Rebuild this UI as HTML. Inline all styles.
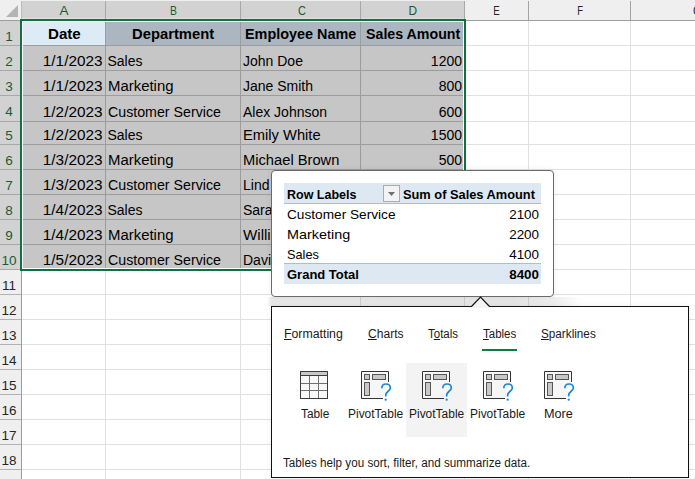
<!DOCTYPE html>
<html><head><meta charset="utf-8">
<style>
*{margin:0;padding:0;box-sizing:border-box}
html,body{width:695px;height:479px;overflow:hidden;background:#fff}
body{position:relative;font-family:"Liberation Sans",sans-serif;color:#000}
.a{position:absolute}
.t{position:absolute;white-space:nowrap;font-size:14px;line-height:14px}
.b{font-weight:bold}
.nm{transform:scaleX(1.05);transform-origin:0 0}
.mk{transform:scaleX(1.065);transform-origin:0 0}
.dt{transform:scaleX(1.095);transform-origin:100% 0}
.hl{position:absolute;height:1px}
.vl{position:absolute;width:1px}
.ch{position:absolute;top:4px;font-size:13.5px;line-height:14px;text-align:center;color:#262626;white-space:nowrap}
.rh{position:absolute;left:0;width:18px;font-size:13.5px;line-height:14px;text-align:center;color:#262626}
.sel{color:#185c37}
.qt{position:absolute;white-space:nowrap;font-size:12.5px;line-height:12px;color:#1a1a1a}
u{text-decoration:underline;text-decoration-thickness:1px;text-underline-offset:1px}
.pt{transform:scaleX(0.957);transform-origin:0 0}
</style></head><body>

<!-- column header bar -->
<div class="a" style="left:0;top:0;width:695px;height:20px;background:#efefef"></div>
<div class="hl" style="left:0;top:20px;width:695px;background:#9e9e9e"></div>
<!-- corner triangle -->
<svg class="a" style="left:0;top:0" width="21" height="20"><polygon points="6,17 18,17 18,5" fill="#b4b4b4"/></svg>
<!-- selected column header A-D -->
<div class="a" style="left:22px;top:1px;width:442px;height:17px;background:#d2d2d2"></div>
<div class="hl" style="left:22px;top:18px;width:442px;background:#e6dede"></div>
<!-- header separators -->
<div class="vl" style="left:21px;top:1px;height:19px;background:#bdbdbd"></div>
<div class="vl" style="left:105px;top:1px;height:18px;background:#a8a8a8"></div>
<div class="vl" style="left:240px;top:1px;height:18px;background:#a8a8a8"></div>
<div class="vl" style="left:360px;top:1px;height:18px;background:#a8a8a8"></div>
<div class="vl" style="left:464px;top:1px;height:19px;background:#a8a8a8"></div>
<div class="vl" style="left:528px;top:1px;height:19px;background:#a4a4a4"></div>
<div class="vl" style="left:630px;top:1px;height:19px;background:#a4a4a4"></div>
<!-- column labels -->
<div class="ch sel" style="left:22px;width:84px"><span style="display:inline-block;transform:scaleX(1.0)">A</span></div>
<div class="ch sel" style="left:106px;width:135px"><span style="display:inline-block;transform:scaleX(0.77)">B</span></div>
<div class="ch sel" style="left:241px;width:121px"><span style="display:inline-block;transform:scaleX(0.81)">C</span></div>
<div class="ch sel" style="left:361px;width:103px"><span style="display:inline-block;transform:scaleX(0.88)">D</span></div>
<div class="ch" style="left:465px;width:63px"><span style="display:inline-block;transform:scaleX(0.72)">E</span></div>
<div class="ch" style="left:529px;width:102px"><span style="display:inline-block;transform:scaleX(0.7)">F</span></div>
<div class="ch" style="left:634px;width:126px"><span style="display:inline-block;transform:scaleX(0.8)">G</span></div>

<!-- row header column -->
<div class="a" style="left:0;top:21px;width:21px;height:458px;background:#efefef"></div>
<div class="a" style="left:0;top:21px;width:20px;height:248px;background:#d2d2d2"></div>


<!-- gridlines -->
<div id="grid"></div>
<div class="vl" style="left:105px;top:21px;height:458px;background:#e1e1e1"></div>
<div class="vl" style="left:240px;top:21px;height:458px;background:#e1e1e1"></div>
<div class="vl" style="left:360px;top:21px;height:458px;background:#e1e1e1"></div>
<div class="vl" style="left:464px;top:21px;height:458px;background:#e1e1e1"></div>
<div class="vl" style="left:528px;top:21px;height:458px;background:#e1e1e1"></div>
<div class="vl" style="left:630px;top:21px;height:458px;background:#e1e1e1"></div>
<div class="hl" style="left:0;top:45px;width:695px;background:#e1e1e1"></div>
<div class="hl" style="left:0;top:70px;width:695px;background:#e1e1e1"></div>
<div class="hl" style="left:0;top:95px;width:695px;background:#e1e1e1"></div>
<div class="hl" style="left:0;top:121px;width:695px;background:#e1e1e1"></div>
<div class="hl" style="left:0;top:144px;width:695px;background:#e1e1e1"></div>
<div class="hl" style="left:0;top:169px;width:695px;background:#e1e1e1"></div>
<div class="hl" style="left:0;top:194px;width:695px;background:#e1e1e1"></div>
<div class="hl" style="left:0;top:219px;width:695px;background:#e1e1e1"></div>
<div class="hl" style="left:0;top:244px;width:695px;background:#e1e1e1"></div>
<div class="hl" style="left:0;top:269px;width:695px;background:#e1e1e1"></div>
<div class="hl" style="left:0;top:294px;width:695px;background:#e1e1e1"></div>
<div class="hl" style="left:0;top:319px;width:695px;background:#e1e1e1"></div>
<div class="hl" style="left:0;top:344px;width:695px;background:#e1e1e1"></div>
<div class="hl" style="left:0;top:369px;width:695px;background:#e1e1e1"></div>
<div class="hl" style="left:0;top:394px;width:695px;background:#e1e1e1"></div>
<div class="hl" style="left:0;top:419px;width:695px;background:#e1e1e1"></div>
<div class="hl" style="left:0;top:444px;width:695px;background:#e1e1e1"></div>
<div class="hl" style="left:0;top:469px;width:695px;background:#e1e1e1"></div>
<!-- row header separators -->
<div class="hl" style="left:0;top:45px;width:21px;background:#a8a8a8"></div>
<div class="hl" style="left:0;top:70px;width:21px;background:#a8a8a8"></div>
<div class="hl" style="left:0;top:95px;width:21px;background:#a8a8a8"></div>
<div class="hl" style="left:0;top:121px;width:21px;background:#a8a8a8"></div>
<div class="hl" style="left:0;top:144px;width:21px;background:#a8a8a8"></div>
<div class="hl" style="left:0;top:169px;width:21px;background:#a8a8a8"></div>
<div class="hl" style="left:0;top:194px;width:21px;background:#a8a8a8"></div>
<div class="hl" style="left:0;top:219px;width:21px;background:#a8a8a8"></div>
<div class="hl" style="left:0;top:244px;width:21px;background:#a8a8a8"></div>
<div class="hl" style="left:0;top:269px;width:21px;background:#a8a8a8"></div>
<div class="hl" style="left:0;top:294px;width:21px;background:#b2b2b2"></div>
<div class="hl" style="left:0;top:319px;width:21px;background:#b2b2b2"></div>
<div class="hl" style="left:0;top:344px;width:21px;background:#b2b2b2"></div>
<div class="hl" style="left:0;top:369px;width:21px;background:#b2b2b2"></div>
<div class="hl" style="left:0;top:394px;width:21px;background:#b2b2b2"></div>
<div class="hl" style="left:0;top:419px;width:21px;background:#b2b2b2"></div>
<div class="hl" style="left:0;top:444px;width:21px;background:#b2b2b2"></div>
<div class="hl" style="left:0;top:469px;width:21px;background:#b2b2b2"></div>

<div class="vl" style="left:21px;top:21px;height:458px;background:#9c9c9c"></div>
<!-- row labels -->
<div class="rh sel" style="top:30px">1</div>
<div class="rh sel" style="top:55px">2</div>
<div class="rh sel" style="top:80px">3</div>
<div class="rh sel" style="top:105px">4</div>
<div class="rh sel" style="top:129px">5</div>
<div class="rh sel" style="top:154px">6</div>
<div class="rh sel" style="top:179px">7</div>
<div class="rh sel" style="top:204px">8</div>
<div class="rh sel" style="top:229px">9</div>
<div class="rh sel" style="top:254px">10</div>
<div class="rh" style="top:279px">11</div>
<div class="rh" style="top:304px">12</div>
<div class="rh" style="top:329px">13</div>
<div class="rh" style="top:354px">14</div>
<div class="rh" style="top:379px">15</div>
<div class="rh" style="top:404px">16</div>
<div class="rh" style="top:429px">17</div>
<div class="rh" style="top:454px">18</div>

<!-- selection block -->
<div class="a" style="left:22px;top:21px;width:442px;height:248px;background:#c6c6c6"></div>
<div class="a" style="left:22px;top:21px;width:83px;height:24px;background:#fff"></div>
<div class="a" style="left:23px;top:22px;width:82px;height:23px;background:#ddebf7"></div>
<div class="a" style="left:106px;top:21px;width:358px;height:24px;background:#acb6c0"></div>
<div class="hl" style="left:106px;top:21px;width:358px;background:#fff"></div>
<div class="hl" style="left:22px;top:21px;width:442px;background:#fff"></div>
<div class="vl" style="left:22px;top:21px;height:248px;background:#fff"></div>
<div class="vl" style="left:463px;top:21px;height:248px;background:#fff"></div>
<div class="hl" style="left:22px;top:268px;width:442px;background:#fff"></div>
<!-- gridlines within selection -->
<div class="vl" style="left:105px;top:22px;height:246px;background:#9c9c9c"></div>
<div class="vl" style="left:240px;top:22px;height:246px;background:#9c9c9c"></div>
<div class="vl" style="left:360px;top:22px;height:246px;background:#9c9c9c"></div>
<div class="hl" style="left:23px;top:45px;width:440px;background:#9c9c9c"></div>
<div class="hl" style="left:23px;top:70px;width:440px;background:#9c9c9c"></div>
<div class="hl" style="left:23px;top:95px;width:440px;background:#9c9c9c"></div>
<div class="hl" style="left:23px;top:121px;width:440px;background:#9c9c9c"></div>
<div class="hl" style="left:23px;top:144px;width:440px;background:#9c9c9c"></div>
<div class="hl" style="left:23px;top:169px;width:440px;background:#9c9c9c"></div>
<div class="hl" style="left:23px;top:194px;width:440px;background:#9c9c9c"></div>
<div class="hl" style="left:23px;top:219px;width:440px;background:#9c9c9c"></div>
<div class="hl" style="left:23px;top:244px;width:440px;background:#9c9c9c"></div>
<!-- green border -->
<div class="a" style="left:20px;top:19px;width:446px;height:252px;border:2px solid #107040"></div>

<!-- cell text -->
<div class="t b" style="left:47.5px;top:27px;transform:scaleX(1.08);transform-origin:0 0">Date</div>
<div class="t b" style="left:132px;top:27px;transform:scaleX(1.056);transform-origin:0 0">Department</div>
<div class="t b" style="left:244.5px;top:27px;transform:scaleX(1.028);transform-origin:0 0">Employee Name</div>
<div class="t b" style="left:365.5px;top:27px;transform:scaleX(1.015);transform-origin:0 0">Sales Amount</div>

<div class="t dt" style="right:593px;top:54px">1/1/2023</div>
<div class="t dt" style="right:593px;top:79px">1/1/2023</div>
<div class="t dt" style="right:593px;top:105px">1/2/2023</div>
<div class="t dt" style="right:593px;top:128px">1/2/2023</div>
<div class="t dt" style="right:593px;top:153px">1/3/2023</div>
<div class="t dt" style="right:593px;top:178px">1/3/2023</div>
<div class="t dt" style="right:593px;top:203px">1/4/2023</div>
<div class="t dt" style="right:593px;top:228px">1/4/2023</div>
<div class="t dt" style="right:593px;top:253px">1/5/2023</div>

<div class="t" style="left:107.5px;top:54px">Sales</div>
<div class="t mk" style="left:107.5px;top:79px">Marketing</div>
<div class="t" style="left:107.5px;top:105px;transform:scaleX(1.015);transform-origin:0 0">Customer Service</div>
<div class="t" style="left:107.5px;top:128px">Sales</div>
<div class="t mk" style="left:107.5px;top:153px">Marketing</div>
<div class="t" style="left:107.5px;top:178px;transform:scaleX(1.015);transform-origin:0 0">Customer Service</div>
<div class="t" style="left:107.5px;top:203px">Sales</div>
<div class="t mk" style="left:107.5px;top:228px">Marketing</div>
<div class="t" style="left:107.5px;top:253px;transform:scaleX(1.015);transform-origin:0 0">Customer Service</div>

<div class="t" style="left:243px;top:54px">John Doe</div>
<div class="t" style="left:243px;top:79px">Jane Smith</div>
<div class="t" style="left:243px;top:105px">Alex Johnson</div>
<div class="t nm" style="left:243px;top:128px">Emily White</div>
<div class="t nm" style="left:243px;top:153px">Michael Brown</div>
<div class="t" style="left:243px;top:178px">Lind</div>
<div class="t" style="left:243px;top:203px">Sara</div>
<div class="t" style="left:243px;top:228px;transform:scaleX(1.08);transform-origin:0 0">Willi</div>
<div class="t" style="left:243px;top:253px">Davi</div>

<div class="t" style="right:233px;top:54px">1200</div>
<div class="t" style="right:233px;top:79px">800</div>
<div class="t" style="right:233px;top:105px">600</div>
<div class="t" style="right:233px;top:128px">1500</div>
<div class="t" style="right:233px;top:153px">500</div>

<!-- pivot preview popup -->
<div class="a" style="left:271px;top:170px;width:283px;height:127px;background:#fff;border:1px solid #6a6a6a;border-radius:4px;box-shadow:0 0 6px rgba(0,0,0,0.07)"></div>
<div class="a" style="left:267px;top:297px;width:315px;height:9px;background:linear-gradient(to right,rgba(0,0,0,0) 0,rgba(0,0,0,0.09) 4px,rgba(0,0,0,0.1) 245px,rgba(0,0,0,0.07) 287px,rgba(0,0,0,0) 315px)"></div>
<div class="a" style="left:284px;top:183px;width:257px;height:20px;background:#dde8f3"></div>
<div class="hl" style="left:284px;top:203px;width:257px;background:#9dc0e3"></div>
<div class="a" style="left:284px;top:264px;width:257px;height:20px;background:#dde8f3"></div>
<div class="hl" style="left:284px;top:263px;width:257px;background:#9dc0e3"></div>
<div class="a" style="left:383px;top:185px;width:17px;height:17px;background:#f3f3f3;border:1px solid #ababab"></div>
<svg class="a" style="left:383px;top:185px" width="17" height="17"><polygon points="5,7 12,7 8.5,11" fill="#6f6f6f"/></svg>
<div class="t b" style="left:287px;top:188px;font-size:12.5px">Row Labels</div>
<div class="t b" style="left:403px;top:188px;font-size:12.5px;transform:scaleX(1.025);transform-origin:0 0">Sum of Sales Amount</div>
<div class="t" style="left:287px;top:208px;font-size:13.4px;transform:scaleX(1.02);transform-origin:0 0">Customer Service</div>
<div class="t" style="left:287px;top:228px;font-size:13.4px;transform:scaleX(1.075);transform-origin:0 0">Marketing</div>
<div class="t" style="left:287px;top:248px;font-size:13.4px;transform:scaleX(0.95);transform-origin:0 0">Sales</div>
<div class="t b" style="left:287px;top:268px;font-size:13.4px;transform:scaleX(0.97);transform-origin:0 0">Grand Total</div>
<div class="t" style="right:156px;top:208px;font-size:13.4px">2100</div>
<div class="t" style="right:156px;top:228px;font-size:13.4px">2200</div>
<div class="t" style="right:156px;top:248px;font-size:13.4px">4100</div>
<div class="t b" style="right:156px;top:268px;font-size:13.4px">8400</div>

<!-- quick analysis panel -->
<div class="a" style="left:271px;top:306px;width:418px;height:172px;background:#fff;border:1px solid #111;box-shadow:0 0 6px rgba(0,0,0,0.07)"></div>
<svg class="a" style="left:460px;top:290px" width="40" height="20"><polygon points="11.5,16.5 20.5,7 29.5,16.5" fill="#f4f4f4"/><polyline points="11.5,16.5 20.5,7 29.5,16.5" fill="none" stroke="#111" stroke-width="1.2"/><rect x="12.5" y="16" width="16" height="2" fill="#f4f4f4"/></svg>
<div class="qt" style="left:284px;top:328px;transform:scaleX(0.984);transform-origin:0 0"><u>F</u>ormatting</div>
<div class="qt" style="left:368px;top:328px;transform:scaleX(0.966);transform-origin:0 0"><u>C</u>harts</div>
<div class="qt" style="left:428px;top:328px;transform:scaleX(0.92);transform-origin:0 0">T<u>o</u>tals</div>
<div class="qt" style="left:483px;top:328px;transform:scaleX(0.92);transform-origin:0 0"><u>T</u>ables</div>
<div class="qt" style="left:541px;top:328px;transform:scaleX(0.938);transform-origin:0 0"><u>S</u>parklines</div>
<div class="a" style="left:482px;top:349px;width:35px;height:2px;background:#107c41"></div>

<div class="a" style="left:406px;top:363px;width:61px;height:74px;background:#f3f3f3"></div>
<!-- icons -->
<svg class="a" style="left:0;top:0" width="695" height="479">
  <g>
    <rect x="300.5" y="371.5" width="27" height="27" fill="#f8f8f8" stroke="#3c3c3c"/>
    <rect x="301" y="372" width="26" height="3.5" fill="#c8c8c8"/>
    <line x1="300.5" y1="375.5" x2="327.5" y2="375.5" stroke="#3c3c3c"/>
    <line x1="301" y1="383.5" x2="327" y2="383.5" stroke="#707070"/>
    <line x1="301" y1="390.5" x2="327" y2="390.5" stroke="#707070"/>
    <line x1="309.5" y1="376" x2="309.5" y2="398" stroke="#707070"/>
    <line x1="318.5" y1="376" x2="318.5" y2="398" stroke="#707070"/>
  </g>
  <g id="pv">
    <path d="M388.5,382 V371.5 H361.5 V398.5 H383" fill="#f6f6f6" stroke="#333"/>
    <rect x="364.5" y="374.5" width="5" height="5" fill="#c8c8c8" stroke="#555"/>
    <rect x="372.5" y="374.5" width="13" height="5" fill="#c8c8c8" stroke="#555"/>
    <rect x="364.5" y="382.5" width="5" height="13" fill="#c8c8c8" stroke="#555"/>
    <path d="M381.8,388.3 C381.8,385.6 383.6,384 386.1,384 C388.6,384 390.3,385.6 390.3,387.9 C390.3,390.8 385.7,391.8 385.7,395 V396.5" fill="none" stroke="#1e88d8" stroke-width="1.7"/>
    <circle cx="385.7" cy="399.7" r="1.15" fill="#1e88d8"/>
  </g>
  <use href="#pv" x="61"/>
  <use href="#pv" x="122"/>
  <use href="#pv" x="183"/>
</svg>
<div class="qt" style="left:301px;top:408px;transform:scaleX(0.948);transform-origin:0 0">Table</div>
<div class="qt pt" style="left:348px;top:408px">PivotTable</div>
<div class="qt pt" style="left:409px;top:408px">PivotTable</div>
<div class="qt pt" style="left:470px;top:408px">PivotTable</div>
<div class="qt" style="left:544px;top:408px;transform:scaleX(1.012);transform-origin:0 0">More</div>
<div class="qt" style="left:283px;top:457px;transform:scaleX(0.934);transform-origin:0 0">Tables help you sort, filter, and summarize data.</div>

</body></html>
